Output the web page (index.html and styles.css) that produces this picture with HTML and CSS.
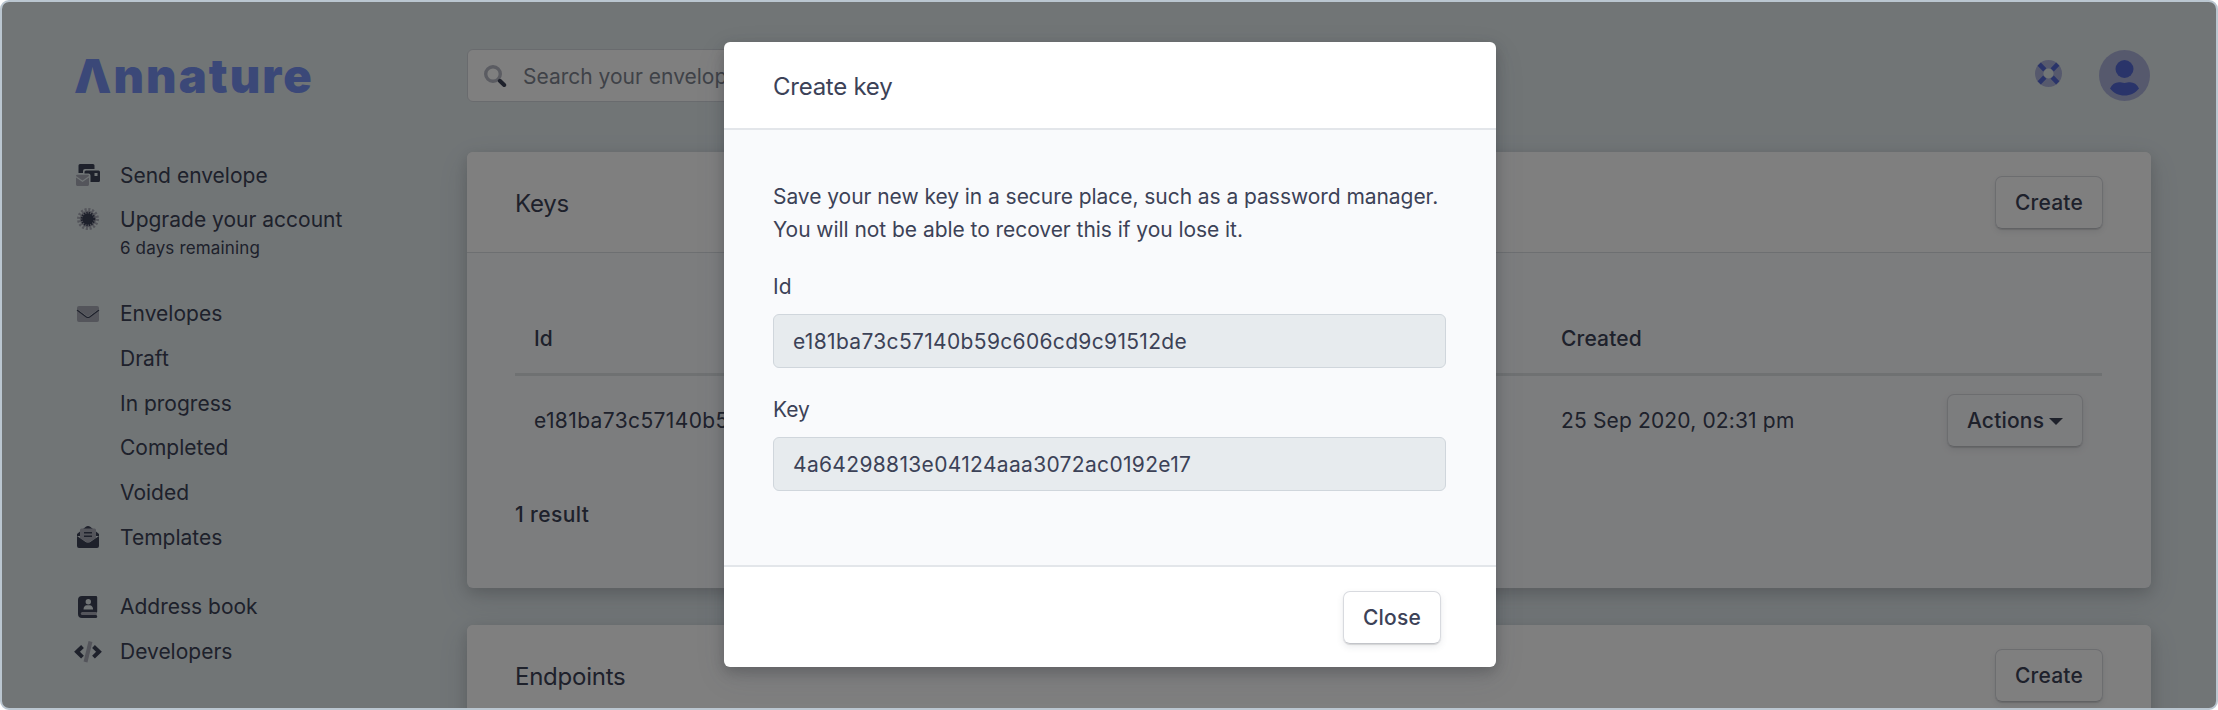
FILE: index.html
```
<!DOCTYPE html>
<html lang="en">
<head>
    <meta charset="UTF-8">
    <meta name="viewport" content="width=device-width, initial-scale=1.0">
    <title>Developers - Annature</title>
    <link rel="stylesheet" href="styles.css">
</head>
<body>
    <div class="app">
        <aside class="sidebar">
            <div class="logo">Λnnature</div>
            <nav class="nav">
                <a class="nav-item">
                    <svg class="icon" width="26" height="24" viewBox="0 0 26 24">
                        <path class="ink" d="M5 1h13a1.500 1.500 0 0 1 1.500 1.500V6H10a2 2 0 0 0-2 2v2H3.500V2.500A1.500 1.500 0 0 1 5 1z"/>
                        <path class="ink" fill-rule="evenodd" d="M11 7.500h12.500A1.500 1.500 0 0 1 25 9v8.500a1.500 1.500 0 0 1-1.500 1.500H15.500v-6.500a2 2 0 0 0-2-2H9.500V9A1.500 1.500 0 0 1 11 7.500zM19.500 10v3h3v-3z"/>
                        <path class="soft" d="M1 13a1.300 1.300 0 0 1 1.300-1.300h10.400A1.300 1.300 0 0 1 14 13L7.500 17.500z"/>
                        <path class="soft" d="M1 14.600l6.500 4.500 6.500-4.500v7a1.300 1.300 0 0 1-1.300 1.300H2.300A1.300 1.300 0 0 1 1 21.600z"/>
                    </svg>
                    <span>Send envelope</span>
                </a>
                <a class="nav-item nav-upgrade">
                    <svg class="icon" width="26" height="24" viewBox="-13 -12 26 24">
                        <circle class="soft" r="8.200"/>
                        <circle class="soft-spikes" r="8.600"/>
                        <circle class="ink" r="5.600"/>
                        <circle class="ink-spikes" r="5.800"/>
                    </svg>
                    <span>Upgrade your account</span>
                </a>
                <div class="nav-note">6 days remaining</div>
                <a class="nav-item nav-gap">
                    <svg class="icon" width="26" height="24" viewBox="0 0 26 24">
                        <path class="soft" d="M2 7V6a2 2 0 0 1 2-2h18a2 2 0 0 1 2 2v1l-9.500 6.800a2.500 2.500 0 0 1-3 0z"/>
                        <path class="soft" d="M2 7.500l9 6.900a3.400 3.400 0 0 0 4 0l9-6.900V18a2 2 0 0 1-2 2H4a2 2 0 0 1-2-2z"/>
                        <path class="fold" d="M2 8l9.400 6.900a2.800 2.800 0 0 0 3.200 0L24 8"/>
                    </svg>
                    <span>Envelopes</span>
                </a>
                <a class="nav-item nav-sub">Draft</a>
                <a class="nav-item nav-sub">In progress</a>
                <a class="nav-item nav-sub">Completed</a>
                <a class="nav-item nav-sub">Voided</a>
                <a class="nav-item">
                    <svg class="icon" width="26" height="24" viewBox="0 0 26 24">
                        <path class="ink" d="M2 9l8.500-7a4 4 0 0 1 5 0L24 9v2H2z"/>
                        <path class="soft" d="M5 5a1.500 1.500 0 0 1 1.500-1.500h13A1.500 1.500 0 0 1 21 5v8l-8 5-8-5z"/>
                        <path class="ink" d="M9 7h8v1.500H9zM9 10.500h8V12H9z"/>
                        <path class="ink" d="M2 11l8.700 6a4 4 0 0 0 4.600 0l8.700-6v10a2 2 0 0 1-2 2H4a2 2 0 0 1-2-2z"/>
                    </svg>
                    <span>Templates</span>
                </a>
                <a class="nav-item nav-gap-book">
                    <svg class="icon" width="26" height="24" viewBox="0 0 26 24">
                        <path class="ink" fill-rule="evenodd" d="M7 1h14a1.200 1.200 0 0 1 1.200 1.200v14.300c0 .700-.500 1-1 1.200v2.300c.500.200 1 .500 1 1.500s-.500 1.400-1 1.400H7a4 4 0 0 1-4-4V5a4 4 0 0 1 4-4zM13.300 4a2.700 2.700 0 1 0 0 5.400 2.700 2.700 0 1 0 0-5.400zM8.500 14.500h9.600c0-2.500-1.500-4.200-3.300-4.200h-3c-1.800 0-3.300 1.700-3.300 4.200z"/>
                        <path class="soft" d="M7.300 17h14v3h-14a1.500 1.500 0 0 1 0-3z"/>
                    </svg>
                    <span>Address book</span>
                </a>
                <a class="nav-item">
                    <svg class="icon" width="28" height="24" viewBox="0 0 28 24">
                        <path class="code-mark" d="M8.500 6.500L3 11.800l5.500 5.300M19.500 6.500l5.500 5.300-5.500 5.300"/>
                        <path class="code-slash" d="M16.500 1.500L11.500 22"/>
                    </svg>
                    <span>Developers</span>
                </a>
            </nav>
        </aside>

        <main class="main">
            <header class="topbar">
                <div class="search">
                    <svg width="24" height="24" viewBox="0 0 24 24">
                        <circle class="lens" cx="10" cy="10" r="7.300"/>
                        <path class="handle" d="M16.800 16.800L21.200 21"/>
                    </svg>
                    <span>Search your envelopes</span>
                </div>
                <div class="user-tools">
                    <svg class="help" width="27" height="27" viewBox="0 0 27 27">
                        <circle class="ring" cx="13.500" cy="13.500" r="9.300"/>
                        <path class="spokes" d="M4.200 4.200l5.600 5.600M22.800 4.200l-5.600 5.600M4.200 22.800l5.600-5.600M22.800 22.800l-5.600-5.600"/>
                    </svg>
                    <svg class="avatar" width="51" height="51" viewBox="0 0 51 51">
                        <circle class="avatar-bg" cx="25.500" cy="25.500" r="25.500"/>
                        <circle class="avatar-fg" cx="25.500" cy="19" r="9"/>
                        <path class="avatar-fg" d="M11 38.500c2-4 5-6.200 9-6.200 2 0 3.500.700 5.500.700s3.500-.700 5.500-.700c4 0 7 2.200 9 6.200-3.500 4.500-8.500 7-14.500 7s-11-2.500-14.500-7z"/>
                    </svg>
                </div>
            </header>

            <section class="card">
                <div class="card-header">
                    <h2>Keys</h2>
                    <button class="btn">Create</button>
                </div>
                <div class="card-body">
                    <table class="table">
                        <thead>
                            <tr>
                                <th class="col-id">Id</th>
                                <th class="col-created">Created</th>
                                <th></th>
                            </tr>
                        </thead>
                        <tbody>
                            <tr>
                                <td class="key-id">e181ba73c57140b59c606cd9c91512de</td>
                                <td>25 Sep 2020, 02:31 pm</td>
                                <td class="col-actions"><button class="btn">Actions <span class="caret"></span></button></td>
                            </tr>
                        </tbody>
                    </table>
                    <div class="result-count">1 result</div>
                </div>
            </section>

            <section class="card">
                <div class="card-header">
                    <h2>Endpoints</h2>
                    <button class="btn">Create</button>
                </div>
                <div class="card-body"></div>
            </section>
        </main>

        <div class="backdrop">
            <div class="modal">
                <div class="modal-header"><h2>Create key</h2></div>
                <div class="modal-body">
                    <p>Save your new key in a secure place, such as a password manager.<br>You will not be able to recover this if you lose it.</p>
                    <label>Id</label>
                    <div class="field key-id">e181ba73c57140b59c606cd9c91512de</div>
                    <label>Key</label>
                    <div class="field key-id">4a64298813e04124aaa3072ac0192e17</div>
                </div>
                <div class="modal-footer"><button class="btn">Close</button></div>
            </div>
        </div>
    </div>
</body>
</html>
```
FILE: styles.css
```
* {
    box-sizing: border-box;
}

body {
    margin: 0;
    background: #fff;
    font-family: 'Inter', sans-serif;
    font-size: 21px;
    line-height: 33px;
    letter-spacing: 0;
    color: #3c4257;
}

h2 {
    margin: 0;
    padding-top: 2px;
    font-size: 24px;
    font-weight: 400;
    letter-spacing: -0.25px;
}

.app {
    position: relative;
    display: flex;
    height: 710px;
    overflow: hidden;
    border: 2px solid #bac6d0;
    border-radius: 9px;
    background: #e2eaed;
}

/* Sidebar */
.sidebar {
    width: 465px;
    flex-shrink: 0;
    padding: 44px 0 0 72px;
}

.logo {
    height: 62px;
    font-size: 47px;
    line-height: 60px;
    font-weight: 900;
    letter-spacing: 2.1px;
    color: #7690f0;
}

.nav {
    display: flex;
    flex-direction: column;
    padding-top: 45px;
}

.nav-item {
    display: flex;
    align-items: center;
    height: 44.7px;
}

.nav-item .icon {
    width: 28px;
    margin-right: 18px;
}

.nav-sub,
.nav-note {
    padding-left: 46px;
}

.nav-upgrade {
    margin-top: -1px;
}

.nav-note {
    height: 24px;
    margin-top: -5px;
    font-size: 17px;
    line-height: 24px;
    letter-spacing: 0.15px;
}

.nav-gap {
    margin-top: 31px;
}

.nav-gap-book {
    margin-top: 25px;
}

.ink {
    fill: #3c4257;
}

.soft {
    fill: #a8aab6;
}

.soft-spikes {
    fill: none;
    stroke: #a8aab6;
    stroke-width: 4.8;
    stroke-dasharray: 1.9 1.477;
}

.ink-spikes {
    fill: none;
    stroke: #3c4257;
    stroke-width: 3;
    stroke-dasharray: 1.3 0.978;
}

.fold {
    fill: none;
    stroke: #3c4257;
    stroke-width: 1.2;
}

.code-mark,
.code-slash {
    fill: none;
    stroke: #3c4257;
    stroke-width: 4;
}

.code-slash {
    stroke: #a8aab6;
}

/* Top bar */
.main {
    flex: 1;
    padding: 47px 65px 0 0;
}

.topbar {
    display: flex;
    justify-content: space-between;
    height: 103px;
}

.search {
    display: flex;
    align-items: center;
    width: 640px;
    height: 53px;
    padding-left: 15px;
    gap: 16px;
    border: 1px solid #d3d6dc;
    border-radius: 6px;
    background: #fff;
    color: #7f8590;
}

.search span {
    padding-top: 1px;
}

.lens {
    fill: none;
    stroke: #b6b9c4;
    stroke-width: 3.4;
}

.handle {
    stroke: #3c4257;
    stroke-width: 4;
    stroke-linecap: round;
}

.user-tools {
    display: flex;
    gap: 37px;
    padding: 1px 1px 0 0;
}

.help {
    margin-top: 10px;
}

.ring {
    fill: none;
    stroke: #adb3da;
    stroke-width: 8.4;
}

.spokes {
    fill: none;
    stroke: #5469d4;
    stroke-width: 4.6;
}

.avatar-bg {
    fill: #adb3da;
}

.avatar-fg {
    fill: #5469d4;
}

/* Cards */
.card {
    margin-bottom: 37px;
    border-radius: 6px;
    background: #f9fafc;
    box-shadow: 0 10px 30px rgba(60, 66, 87, 0.12), 0 5px 14px rgba(0, 0, 0, 0.14);
}

.card-header {
    display: flex;
    align-items: center;
    justify-content: space-between;
    height: 101px;
    padding: 0 48px;
    border-bottom: 1px solid #dadee2;
    border-radius: 6px 6px 0 0;
    background: #fff;
}

.card-body {
    height: 335px;
    padding: 48px 49px 0 48px;
}

.btn {
    height: 53px;
    padding: 0 19px;
    border: 1px solid #d8dadf;
    border-bottom-color: #c2c4c9;
    border-radius: 7px;
    background: transparent;
    box-shadow: 0 1px 1px rgba(0, 0, 0, 0.12), 0 3px 7px rgba(60, 66, 87, 0.1);
    font: inherit;
    font-weight: 500;
    letter-spacing: 0.2px;
    color: inherit;
}

.table {
    width: 100%;
    border-collapse: collapse;
    table-layout: fixed;
    letter-spacing: 0.15px;
}

.table th,
.table td {
    padding: 0 19px;
    text-align: left;
}

.table th {
    height: 73px;
    padding-top: 4px;
    border-bottom: 3px solid #dfe2e5;
    font-weight: 500;
}

.table td {
    height: 91px;
}

.table .col-id {
    width: 1027px;
}

.table .col-created {
    width: 330px;
}

.table .col-actions {
    text-align: right;
}

.table .key-id {
    letter-spacing: 0.38px;
}

.caret {
    display: inline-block;
    margin: 0 0 3px -1px;
    border-top: 7px solid #3c4257;
    border-left: 7px solid transparent;
    border-right: 7px solid transparent;
}

.result-count {
    margin-top: 33px;
    font-weight: 500;
    letter-spacing: 0.4px;
}

/* Modal */
.backdrop {
    position: absolute;
    inset: 0;
    padding-top: 40px;
    background: rgba(0, 0, 0, 0.5);
}

.modal {
    width: 772px;
    margin-left: 722px;
    overflow: hidden;
    border-radius: 6px;
    background: #fff;
    box-shadow: 0 10px 30px rgba(60, 66, 87, 0.12), 0 5px 14px rgba(0, 0, 0, 0.2);
}

.modal-header {
    display: flex;
    align-items: center;
    height: 88px;
    padding: 0 49px;
    border-bottom: 2px solid #e3e6ea;
}

.modal-body {
    height: 437px;
    padding: 50px 50px 0 49px;
    border-bottom: 2px solid #e3e6ea;
    background: #f9fafc;
}

.modal-body p {
    margin: 0 0 24px;
    letter-spacing: -0.05px;
    white-space: nowrap;
}

.modal-body label {
    display: block;
    margin-bottom: 11px;
}

.field {
    height: 54px;
    margin-bottom: 25px;
    padding: 0 19px;
    border: 1px solid #d0d6dc;
    border-radius: 6px;
    background: #e7ebee;
    line-height: 54px;
    letter-spacing: 0.33px;
}

.modal-footer {
    display: flex;
    align-items: center;
    justify-content: flex-end;
    height: 100px;
    padding-right: 55px;
}
```
